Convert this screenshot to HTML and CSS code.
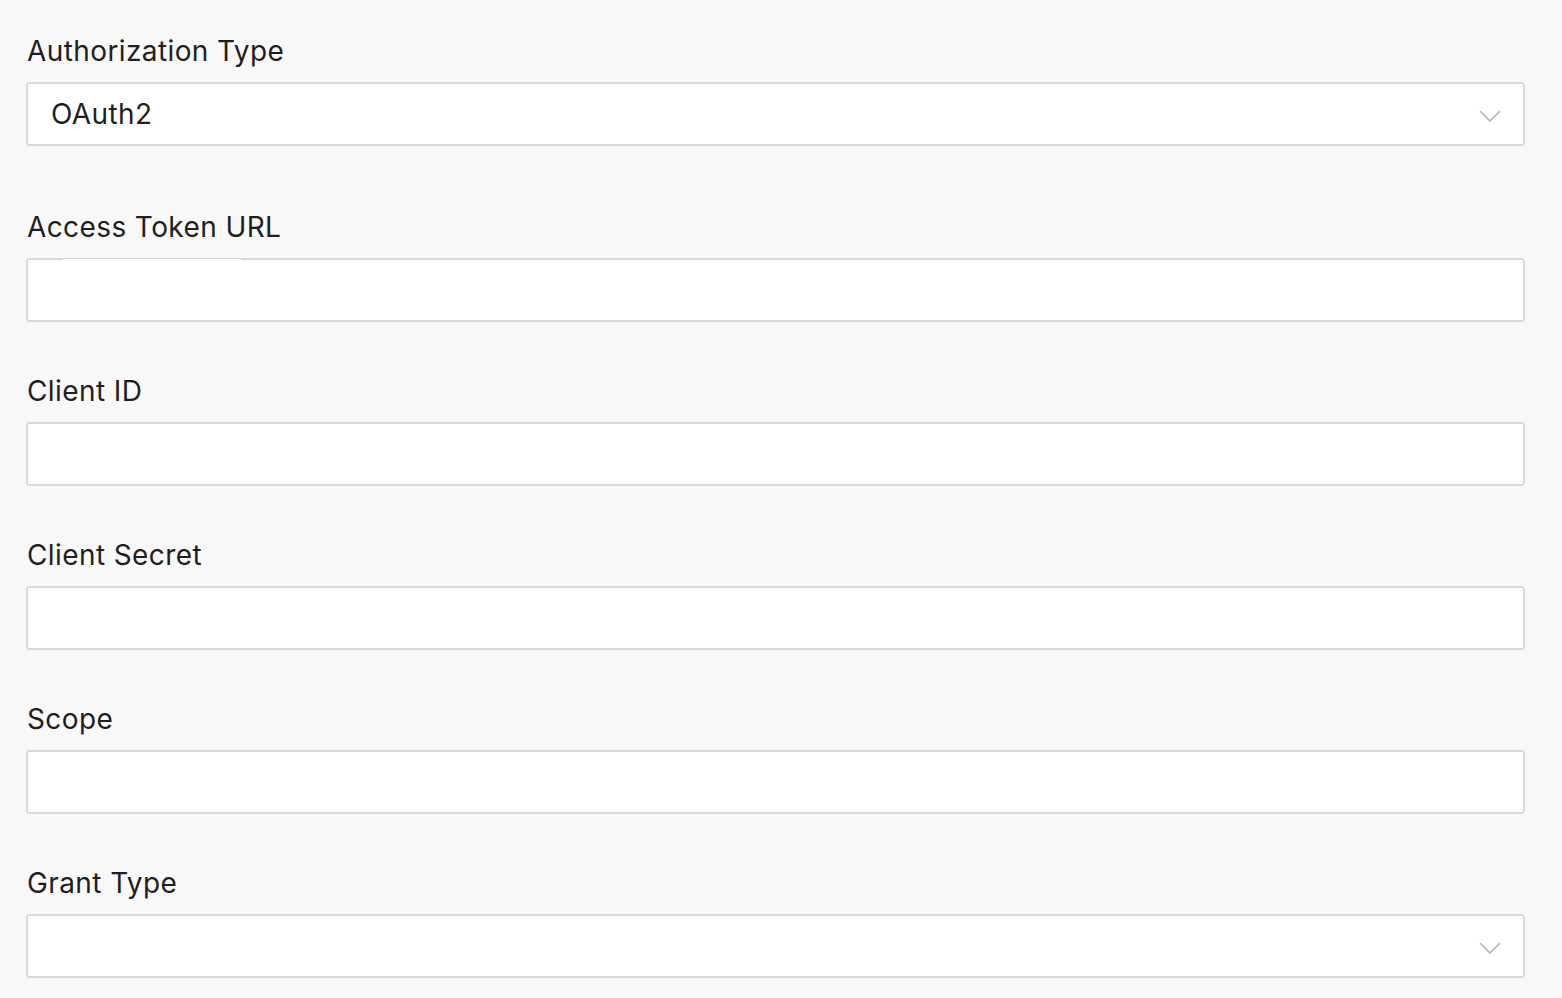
FILE: index.html
```html
<!DOCTYPE html>
<html>
<head>
<meta charset="utf-8">
<link rel="stylesheet" href="styles.css">
</head>
<body>
<form class="form">
  <div class="field field-first">
    <label class="label">Authorization Type</label>
    <div class="control select">
      <span class="value">OAuth2</span>
      <svg class="chev" width="22" height="12" viewBox="0 0 22 12"><path d="M1 1 L11 11 L21 1" fill="none" stroke="#b3b3b3" stroke-width="1.6"/></svg>
    </div>
  </div>
  <div class="field">
    <label class="label">Access Token URL</label>
    <div class="control"><span class="patch"></span></div>
  </div>
  <div class="field">
    <label class="label">Client ID</label>
    <div class="control"></div>
  </div>
  <div class="field">
    <label class="label">Client Secret</label>
    <div class="control"></div>
  </div>
  <div class="field">
    <label class="label">Scope</label>
    <div class="control"></div>
  </div>
  <div class="field">
    <label class="label">Grant Type</label>
    <div class="control select">
      <span class="value"></span>
      <svg class="chev" width="22" height="12" viewBox="0 0 22 12"><path d="M1 1 L11 11 L21 1" fill="none" stroke="#b3b3b3" stroke-width="1.6"/></svg>
    </div>
  </div>
</form>
</body>
</html>
```
FILE: styles.css
```css
html, body {
  margin: 0;
  padding: 0;
  background: #f8f8f8;
}
body {
  font-family: Inter, "Liberation Sans", sans-serif;
  color: #1f1f1f;
}
.form {
  display: flex;
  flex-direction: column;
  gap: 51px;
  padding: 33px 37px 0 26px;
}
.field {
  display: flex;
  flex-direction: column;
  gap: 13px;
}
.field-first {
  margin-bottom: 12px;
}
.label {
  font-size: 28px;
  line-height: 36px;
  padding-left: 1px;
  letter-spacing: 0.4px;
}
.control {
  position: relative;
  box-sizing: border-box;
  height: 64px;
  background: #ffffff;
  border: 2px solid #d8d8d8;
  border-radius: 4px;
  display: flex;
  align-items: center;
  padding: 0 22px 0 23px;
}
.select {
  justify-content: space-between;
}
.value {
  font-size: 28px;
  letter-spacing: 0.4px;
}
.chev {
  display: block;
  margin-top: 3px;
}
.patch {
  position: absolute;
  left: 34px;
  top: -1px;
  width: 180px;
  height: 3px;
  background: #ffffff;
  border-radius: 2px;
}
```
